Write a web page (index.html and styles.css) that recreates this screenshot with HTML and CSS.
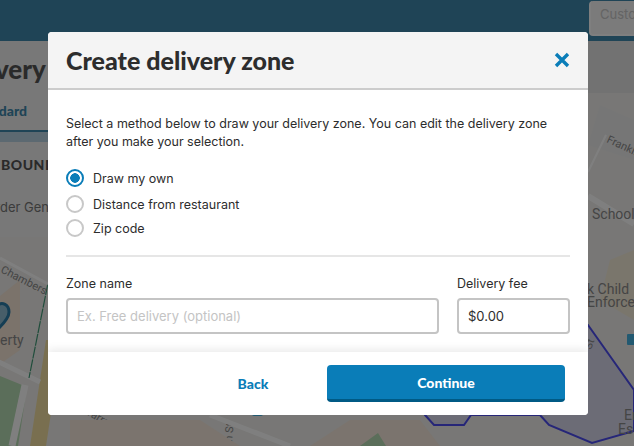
FILE: index.html
```html
<!DOCTYPE html>
<html lang="en">

<head>
  <meta charset="UTF-8">
  <meta name="viewport" content="width=device-width, initial-scale=1.0">
  <title>Create delivery zone</title>
  <link rel="stylesheet" href="styles.css">
</head>

<body>
  <div class="page">
    <header class="topbar">
      <div class="topbar-search">Customer</div>
    </header>

    <div class="workspace">
      <aside class="sidebar">
        <h2 class="sidebar-title">Delivery Hours</h2>
        <div class="sidebar-tab">Standard</div>
        <div class="sidebar-stripe"></div>
        <div class="sidebar-heading">BOUNDARIES</div>
        <div class="sidebar-item">Border General</div>
      </aside>

      <!-- Map tiles -->
      <svg class="map" viewBox="0 41 634 405" width="634" height="405">
        <rect x="0" y="41" width="634" height="405" fill="#f0efec" />
        <rect x="0" y="41" width="634" height="52" fill="#e4e4e4" />
        <polygon points="0,296 20,280 20,350 0,364" fill="#f6e6d6" />
        <polygon points="0,376 27,387 18,446 0,446" fill="#b6dcb4" />
        <polygon points="46,340 62,340 46,446 30,446" fill="#f2dfa0" />
        <path d="M-5,360 L40,382" stroke="#fff" stroke-width="5" fill="none" />
        <path d="M25,385 L12,446" stroke="#fff" stroke-width="7" fill="none" />
        <path d="M48,283 L29,378" stroke="#3f9a76" stroke-width="1.2" stroke-dasharray="12 1" fill="none" />
        <path d="M0,258 L48,284" stroke="#fff" stroke-width="3" fill="none" />
        <path d="M-2,305 C2,302 9,304 9,312 C9,318 3,324 -1,328" stroke="#2a7ca8" stroke-width="3" fill="#8fbcd2" />
        <text class="map-label" transform="translate(0 272) rotate(27)">Chambers St</text>
        <text class="map-label map-label-big" x="0" y="345">erty</text>
        <text class="map-label" transform="translate(82 412) rotate(30)">Warren St</text>
        <text class="map-label" transform="translate(232 442) rotate(-85)">h St</text>

        <!-- lower street blocks -->
        <polygon points="70,420 200,420 240,446 70,446" fill="#f6e9dc" />
        <polygon points="310,446 350,420 420,420 440,446" fill="#f6e9dc" />
        <polygon points="360,446 378,433 386,446" fill="#b6dcb4" />
        <path d="M210,415 L290,446" stroke="#fff" stroke-width="5" fill="none" />
        <rect x="252" y="405" width="11" height="11" rx="2" fill="#45b3e2" />
        <rect x="255" y="408" width="5" height="5" fill="#fff" />

        <!-- right side blocks -->
        <polygon points="600,105 634,120 634,160 588,145" fill="#ededed" />
        <polygon points="610,260 634,250 634,320 600,300" fill="#f5ecd8" />
        <path d="M588,196 L634,224" stroke="#fff" stroke-width="6" fill="none" />
        <path d="M606,135 L588,172" stroke="#fff" stroke-width="2" fill="none" />
        <text class="map-label" transform="translate(606 142) rotate(25)">Franklin St</text>
        <text class="map-label map-label-big" x="592" y="219">School</text>
        <text class="map-label map-label-big" x="587" y="294">k Child</text>
        <text class="map-label map-label-big" x="587" y="307">Enforcement</text>
        <rect x="627" y="334" width="9" height="11" rx="1" fill="#45b3e2" />

        <!-- drawn delivery zone -->
        <polygon class="zone" points="588,325 634,390 634,431 592,443 549,425 540,415 471,415 464,425 434,425 425,415 420,300" />
        <text class="map-label" transform="translate(591 350) rotate(-70)">St</text>
        <text class="map-label map-label-big" x="624" y="420">En</text>
        <text class="map-label map-label-big" x="618" y="434">Esc</text>
      </svg>
    </div>

    <div class="overlay"></div>

    <div class="modal">
      <div class="modal-header">
        <h1>Create delivery zone</h1>
        <svg class="modal-close" width="16" height="16" viewBox="0 0 16 16">
          <path d="M2 2 L14 14 M14 2 L2 14" stroke="#0a7db8" stroke-width="3.4" fill="none" />
        </svg>
      </div>

      <div class="modal-body">
        <p class="intro">Select a method below to draw your delivery zone. You can edit the delivery zone after you make your selection.</p>

        <div class="radio-group">
          <div class="radio-row radio-row-first">
            <span class="radio radio-checked"></span>
            <span>Draw my own</span>
          </div>
          <div class="radio-row">
            <span class="radio"></span>
            <span>Distance from restaurant</span>
          </div>
          <div class="radio-row">
            <span class="radio"></span>
            <span>Zip code</span>
          </div>
        </div>

        <div class="fields">
          <div class="field field-name">
            <label for="zoneName">Zone name</label>
            <input type="text" id="zoneName" placeholder="Ex. Free delivery (optional)" />
          </div>
          <div class="field field-fee">
            <label for="deliveryFee">Delivery fee</label>
            <input type="text" id="deliveryFee" value="$0.00" />
          </div>
        </div>
      </div>

      <div class="modal-footer">
        <button class="btn-back">Back</button>
        <button class="btn-continue">Continue</button>
      </div>
    </div>
  </div>
</body>

</html>
```

FILE: styles.css
```css
body {
  font-family: Inter, "Liberation Sans", sans-serif;
  margin: 0;
  background-color: #eaeaea;
}

.page {
  position: relative;
  width: 634px;
  height: 446px;
  overflow: hidden;
}

/* page behind the modal */
.topbar {
  height: 41px;
  background-color: #3e88ac;
  display: flex;
  justify-content: flex-end;
}

.topbar-search {
  width: 60px;
  height: 28px;
  margin: 1px -28px 0 0;
  padding: 5px 0 0 9px;
  box-sizing: content-box;
  background: #f6f6f6;
  border: 2px solid #fff;
  border-top: none;
  border-radius: 4px;
  font-size: 13px;
  color: #c8c8c8;
  white-space: nowrap;
  overflow: hidden;
}

.workspace {
  position: relative;
  height: 405px;
}

.map {
  display: block;
}

.map-label {
  font-family: Roboto, sans-serif;
  font-size: 11px;
  fill: #8a8a8a;
}

.map-label-big {
  font-size: 14px;
}

.zone {
  fill: #c9c9ee;
  fill-opacity: 0.6;
  stroke: #4d4df0;
  stroke-width: 2;
}

.sidebar {
  position: absolute;
  left: 0;
  top: 0;
  z-index: 1;
  width: 100px;
  height: 196px;
  background: #f0f0f0;
  overflow: hidden;
  white-space: nowrap;
}

.sidebar-title {
  margin: 12px 0 0 -52px;
  font-family: Lato, sans-serif;
  font-size: 26px;
  font-weight: 900;
  color: #555;
}

.sidebar-tab {
  margin: 17px 0 0 -29px;
  font-family: Lato, sans-serif;
  font-size: 14px;
  font-weight: 900;
  color: #3e88ac;
}

.sidebar-stripe {
  height: 10px;
  margin-top: 11px;
  background: #b8d2e2;
  border-top: 2px solid #3e88ac;
}

.sidebar-heading {
  margin: 14px 0 0 1px;
  font-family: Lato, sans-serif;
  font-size: 14px;
  font-weight: 900;
  letter-spacing: 0.5px;
  color: #555;
}

.sidebar-item {
  margin: 26px 0 0 -21px;
  font-size: 13px;
  color: #777;
}

.overlay {
  position: absolute;
  inset: 0;
  z-index: 2;
  background: rgba(0, 0, 0, 0.5);
}

/* modal */
.modal {
  position: absolute;
  left: 48px;
  top: 32px;
  z-index: 3;
  width: 540px;
  height: 383px;
  display: flex;
  flex-direction: column;
  background: #fff;
  border-radius: 4px;
  overflow: hidden;
  color: #2d2d2d;
}

.modal-header {
  display: flex;
  align-items: center;
  justify-content: space-between;
  height: 56px;
  padding: 0 18px;
  background: #f4f4f4;
  border-bottom: 2px solid #ccc;
}

.modal-header h1 {
  margin: 0;
  font-family: Lato, sans-serif;
  font-size: 25px;
  font-weight: 900;
  color: #2d2d2d;
}

.modal-body {
  flex: 1;
  padding: 25px 18px 0;
}

.intro {
  margin: 0;
  font-size: 12.5px;
  line-height: 18px;
}

.radio-group {
  display: flex;
  flex-direction: column;
  padding-bottom: 18px;
  border-bottom: 2px solid #e6e6e6;
}

.radio-row {
  display: flex;
  align-items: center;
  gap: 9px;
  height: 18px;
  margin-top: 6px;
  font-size: 12.5px;
}

.radio-row-first {
  margin-top: 18px;
  margin-bottom: 2px;
}

.radio {
  width: 18px;
  height: 18px;
  box-sizing: border-box;
  border: 2px solid #c8c8c8;
  border-radius: 50%;
  background: #fff;
}

.radio-checked {
  border-color: #0a7db8;
  background: radial-gradient(circle, #0a7db8 0 4.5px, #fff 5px);
}

.fields {
  display: flex;
  gap: 18px;
  margin-top: 19px;
}

.field {
  display: flex;
  flex-direction: column;
  gap: 6px;
  font-size: 12.5px;
}

.field-name {
  flex: 1;
}

.field-fee {
  width: 113px;
}

.field label {
  line-height: 16px;
}

.field input {
  height: 36px;
  box-sizing: border-box;
  padding: 0 9px;
  font-family: inherit;
  font-size: 13px;
  color: #2d2d2d;
  border: 2px solid #c4c4c4;
  border-radius: 4px;
  width: 100%;
}

.field input::placeholder {
  color: #c4c4c4;
  opacity: 1;
}

.modal-footer {
  position: relative;
  display: flex;
  justify-content: flex-end;
  gap: 14px;
  height: 63px;
  padding: 13px 23px 0;
  box-sizing: border-box;
  background: #fff;
  box-shadow: 0 -3px 8px rgba(0, 0, 0, 0.08);
}

.btn-back,
.btn-continue {
  height: 37px;
  font-family: Lato, sans-serif;
  font-size: 14px;
  font-weight: 900;
  border: none;
  cursor: pointer;
}

.btn-back {
  width: 120px;
  background: none;
  color: #0a7db8;
}

.btn-continue {
  width: 238px;
  background-color: #0a7db8;
  color: white;
  border-bottom: 3px solid #005a85;
  border-radius: 4px;
}
```
